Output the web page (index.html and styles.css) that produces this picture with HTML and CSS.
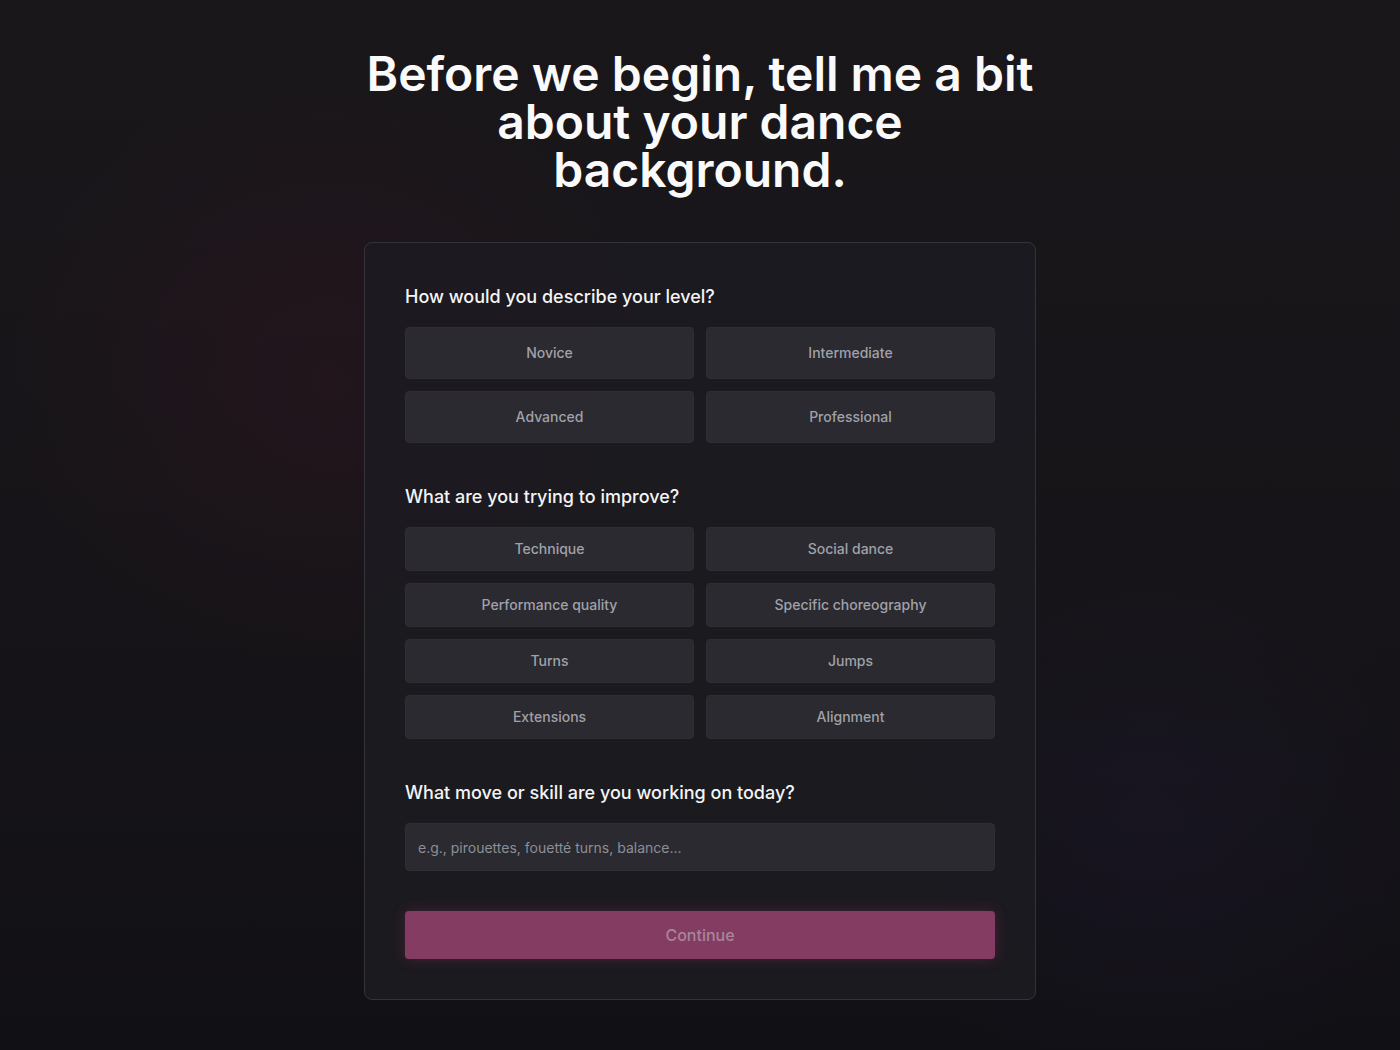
FILE: index.html
```html
<!DOCTYPE html>
<html lang="en">
<head>
<meta charset="utf-8">
<title>Dance background</title>
<link rel="stylesheet" href="styles.css">
</head>
<body>
<main class="page">
  <h1 class="title">Before we begin, tell me a bit about your dance background.</h1>
  <section class="card">
    <div class="section">
      <h2 class="label">How would you describe your level?</h2>
      <div class="grid">
        <button class="opt opt-lg">Novice</button>
        <button class="opt opt-lg">Intermediate</button>
        <button class="opt opt-lg">Advanced</button>
        <button class="opt opt-lg">Professional</button>
      </div>
    </div>
    <div class="section">
      <h2 class="label">What are you trying to improve?</h2>
      <div class="grid">
        <button class="opt">Technique</button>
        <button class="opt">Social dance</button>
        <button class="opt">Performance quality</button>
        <button class="opt">Specific choreography</button>
        <button class="opt">Turns</button>
        <button class="opt">Jumps</button>
        <button class="opt">Extensions</button>
        <button class="opt">Alignment</button>
      </div>
    </div>
    <div class="section">
      <h2 class="label">What move or skill are you working on today?</h2>
      <input class="field" type="text" placeholder="e.g., pirouettes, fouetté turns, balance...">
    </div>
    <button class="continue" disabled>Continue</button>
  </section>
</main>
</body>
</html>
```

FILE: styles.css
```css
* { box-sizing: border-box; }
html, body { margin: 0; height: 100%; }
body {
  font-family: Inter, "Noto Sans", sans-serif;
  color: #f4f4f5;
  background-color: #131217;
  background-image:
    radial-gradient(ellipse 480px 440px at 330px 380px, rgba(60, 20, 34, 0.28), transparent 70%),
    radial-gradient(ellipse 420px 380px at 1150px 820px, rgba(36, 28, 64, 0.25), transparent 70%),
    linear-gradient(180deg, #1a171b 0%, #161418 60%, #111015 100%);
  min-height: 1050px;
}
.page {
  width: 672px;
  margin: 0 auto;
  padding-top: 50px;
  padding-bottom: 50px;
}
.title {
  margin: 0 0 48px;
  font-size: 48px;
  line-height: 48px;
  font-weight: 600;
  text-align: center;
  color: #fafafa;
}
.card {
  border: 1px solid #34333a;
  border-radius: 8px;
  background: rgba(28, 27, 33, 0.92);
  padding: 40px;
  display: flex;
  flex-direction: column;
  gap: 40px;
}
.section { display: flex; flex-direction: column; gap: 16px; }
.label {
  margin: 0;
  font-size: 18px;
  line-height: 28px;
  font-weight: 500;
  color: #f4f4f5;
}
.grid {
  display: grid;
  grid-template-columns: 1fr 1fr;
  gap: 12px;
}
.opt {
  font-family: inherit;
  font-size: 14px;
  line-height: 20px;
  font-weight: 500;
  color: #a1a1aa;
  background: #2a2a30;
  border: 1px solid #2e2e34;
  border-radius: 4px;
  padding: 11px 16px;
  text-align: center;
}
.opt-lg { padding: 15px 16px; }
.field {
  width: 100%;
  height: 48px;
  font-family: inherit;
  font-size: 14px;
  color: #e4e4e7;
  background: #2a2a30;
  border: 1px solid #2e2e34;
  border-radius: 4px;
  padding: 0 12px;
  outline: none;
}
.field::placeholder { color: #8e8e96; }
.continue {
  height: 48px;
  font-family: inherit;
  font-size: 16px;
  font-weight: 500;
  color: #a7869a;
  background: #843c62;
  border: none;
  border-radius: 4px;
  box-shadow: 0 0 14px rgba(200, 60, 130, 0.25);
}
```
